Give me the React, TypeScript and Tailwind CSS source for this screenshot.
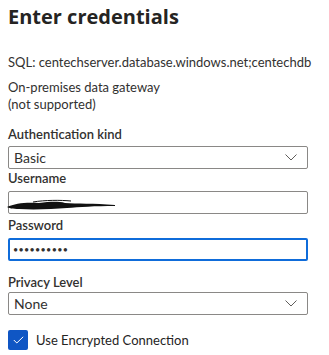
import React from 'react';

const Chevron = () => (
  <svg width="12" height="7" viewBox="0 0 12 7" fill="none" className="text-[#605e5c]">
    <path d="M0.5 0.5 L6 6 L11.5 0.5" stroke="currentColor" strokeWidth="1" />
  </svg>
);

const Label = ({ children, className = '' }: { children: React.ReactNode; className?: string }) => (
  <div className={`text-[13px] font-semibold leading-[17px] text-[#323130] ${className}`}>{children}</div>
);

const Select = ({ value }: { value: string }) => (
  <div className="flex h-[23px] w-[300px] items-center justify-between rounded-[2px] border border-[#8a8886] pl-[5px] pr-[10px] text-[14px] text-[#323130]">
    <span>{value}</span>
    <Chevron />
  </div>
);

export default function App() {
  return (
    <div className="min-h-screen bg-white pl-[8px] pt-[3px] font-['Lato',sans-serif] text-[#323130]">
      <h1 className="font-['Open_Sans',sans-serif] text-[20px] font-bold leading-[28px] text-[#252423]">Enter credentials</h1>

      <div className="mt-[23px] whitespace-nowrap text-[13px] leading-[17px]">SQL: centechserver.database.windows.net;centechdb</div>
      <div className="mt-[8px] text-[13px] leading-[17px]">On-premises data gateway</div>
      <div className="text-[13px] leading-[17px]">(not supported)</div>

      <Label className="mt-[13px]">Authentication kind</Label>
      <div className="mt-[3px]">
        <Select value="Basic" />
      </div>

      <Label className="mt-[1px]">Username</Label>
      <div className="relative mt-[4px] h-[23px] w-[300px] rounded-[2px] border border-[#8a8886]">
        <svg className="absolute left-[-4px] top-[6px]" width="112" height="14" viewBox="0 0 112 14">
          <path
            d="M2 9 C10 5, 22 4, 34 5 C44 4, 52 3, 60 5 C72 6, 88 5, 110 7 L110 8 C90 8, 74 9, 62 10 C48 11, 30 12, 14 11 C8 11, 3 10, 2 9 Z"
            fill="#111"
          />
          <path d="M28 4 C40 2, 56 2, 66 3" stroke="#111" strokeWidth="1" fill="none" />
        </svg>
      </div>

      <Label className="mt-[3px]">Password</Label>
      <div className="mt-[4px] flex h-[23px] w-[300px] items-center rounded-[2px] border-2 border-[#0f6cda] pl-[3px] text-[9px] tracking-[0.3px] text-[#323130]">
        ••••••••••
      </div>

      <Label className="mt-[13px]">Privacy Level</Label>
      <div className="mt-[1px]">
        <Select value="None" />
      </div>

      <div className="mt-[15px] flex items-center gap-[8px]">
        <div className="flex h-[20px] w-[20px] items-center justify-center rounded-[2px] bg-[#0f56c4]">
          <svg width="11" height="8" viewBox="0 0 11 8" fill="none">
            <path d="M0.8 4 L3.8 7 L10.2 0.8" stroke="white" strokeWidth="1" />
          </svg>
        </div>
        <span className="text-[13px] leading-[20px] text-[#252423]">Use Encrypted Connection</span>
      </div>
    </div>
  );
}
